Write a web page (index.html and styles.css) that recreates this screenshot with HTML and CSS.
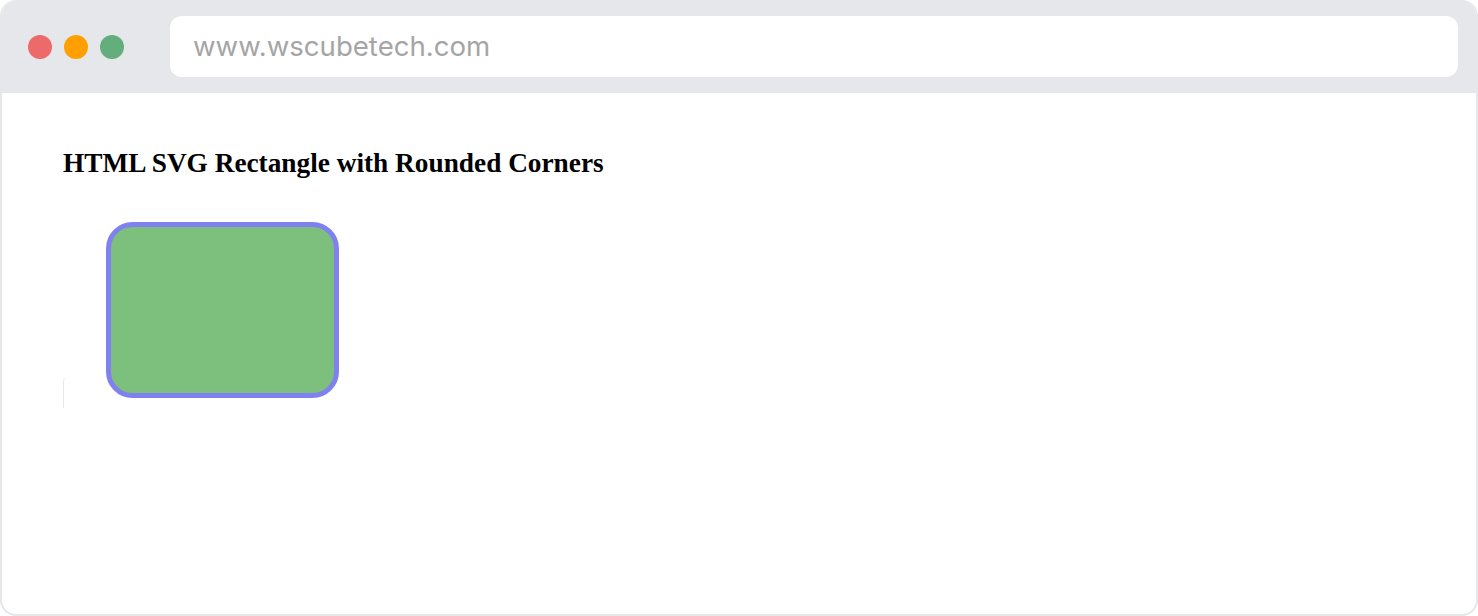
FILE: index.html
```html
<!DOCTYPE html>
<html lang="en">
<head>
    <meta charset="UTF-8">
    <meta name="viewport" content="width=device-width, initial-scale=1.0">
    <title>HTML SVG Rectangle with Rounded Corners</title>
    <link rel="stylesheet" href="styles.css">
</head>
<body>
    <div class="window">
        <div class="toolbar">
            <div class="dots">
                <span class="dot red"></span>
                <span class="dot orange"></span>
                <span class="dot green"></span>
            </div>
            <div class="address">www.wscubetech.com</div>
        </div>

        <div class="page">
            <h3>HTML SVG Rectangle with Rounded Corners</h3>

            <div class="demo">
                <span class="edge"></span>
                <svg width="300" height="190" class="shape">
                    <rect x="44.5" y="6.5" width="228" height="171" rx="24" ry="24"
                          fill="#7dbf7c" stroke="#8080f0" stroke-width="5" />
                </svg>
            </div>
        </div>
    </div>
</body>
</html>
```

FILE: styles.css
```css
html, body {
    margin: 0;
    height: 100%;
}

body {
    background-color: #fff;
}

.window {
    height: 100%;
    box-sizing: border-box;
    border: 2px solid #e5e7eb;
    border-top: none;
    border-radius: 16px;
    overflow: hidden;
    background: #fff;
}

.toolbar {
    height: 93px;
    background-color: #e5e7eb;
    display: flex;
    align-items: center;
    padding: 0 18px 0 26px;
}

.dots {
    display: flex;
    gap: 12px;
    margin-right: 46px;
}

.dot {
    width: 24px;
    height: 24px;
    border-radius: 50%;
    display: block;
}

.red {
    background-color: #ec6a6a;
}

.orange {
    background-color: #ffa000;
}

.green {
    background-color: #63ae7c;
}

.address {
    flex: 1;
    height: 61px;
    margin-top: -1px;
    background: #fff;
    border-radius: 12px;
    display: flex;
    align-items: center;
    padding-left: 23px;
    font-family: Inter, "Open Sans", sans-serif;
    font-size: 27.6px;
    color: #a5a5a5;
}

.page {
    padding: 0 0 0 61px;
}

h3 {
    font-family: "Liberation Serif", "Times New Roman", serif;
    font-size: 27.3px;
    font-weight: bold;
    color: #000;
    margin: 55px 0 0;
}

.demo {
    display: flex;
    align-items: flex-end;
    margin-top: 39px;
}

.edge {
    display: block;
    width: 4px;
    height: 30px;
    border-left: 1px solid #e3e8ef;
    border-top-left-radius: 4px;
}

.shape {
    display: block;
    margin-left: -4px;
}
```
